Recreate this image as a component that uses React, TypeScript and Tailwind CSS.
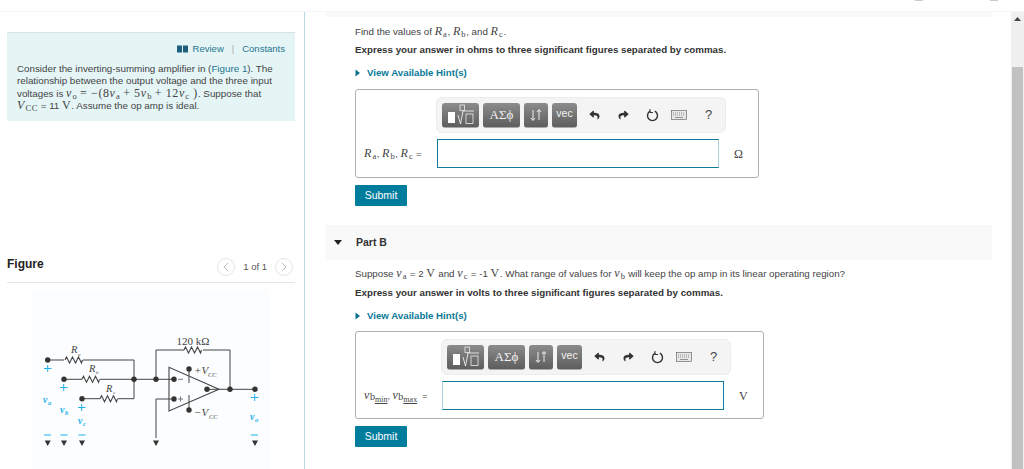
import React from "react";
import { FaReply, FaShare } from "react-icons/fa";

const serif = "font-['Liberation_Serif',serif]";

function V({ s, sub }: { s: string; sub?: string }) {
  return (
    <span className={`${serif} text-[12px] tracking-[0.6px] text-[#444]`}>
      <i>{s}</i>
      {sub && <span className="text-[8.5px] leading-none relative top-[2px] ml-[0.5px]">{sub}</span>}
    </span>
  );
}

function M({ children }: { children: React.ReactNode }) {
  return <span className={`${serif} text-[12px] tracking-[0.6px]`}>{children}</span>;
}

function RootIcon() {
  return (
    <svg width="30" height="24" viewBox="0 0 30 24" fill="none">
      <rect x="2" y="9" width="7" height="11" fill="#fff" />
      <rect x="14" y="2" width="4.5" height="5.5" stroke="#eee" strokeWidth="0.8" />
      <path d="M12 12l2.5 9 2.5-13h11" stroke="#eee" strokeWidth="0.9" />
      <rect x="20" y="11" width="7" height="9.5" stroke="#ddd" strokeWidth="0.9" />
    </svg>
  );
}

function Toolbar() {
  const btn =
    "h-[25px] rounded-[3px] bg-gradient-to-b from-[#8c8c8c] to-[#5e5e5e] border-b border-[#aaa] text-[#f2f2f2] flex items-center justify-center shrink-0";
  return (
    <div className="h-[36px] w-[290px] rounded-[6px] bg-[#f4f4f4] border border-[#ececec] flex items-center pl-[5px] text-[#333]">
      <div className={`${btn} w-[37px]`}>
        <RootIcon />
      </div>
      <div className={`${btn} w-[37px] ml-[4px] ${serif} text-[13px]`}>ΑΣϕ</div>
      <div className={`${btn} w-[24px] ml-[4px]`}>
        <svg width="14" height="14" viewBox="0 0 14 14" fill="none" stroke="#eee" strokeWidth="1">
          <path d="M4 2v10M2 10l2 2.5L6 10M10 12V2M8 4l2-2.5L12 4" />
        </svg>
      </div>
      <div className={`${btn} w-[25px] ml-[4px] text-[10.5px] pb-[1px]`}>vec</div>
      <FaReply className="ml-[12px] w-[11px] h-[10px] text-[#333]" />
      <FaShare className="ml-[18px] w-[11px] h-[10px] text-[#333]" />
      <svg className="ml-[17px]" width="13" height="14" viewBox="0 0 13 14" fill="none" stroke="#333" strokeWidth="1.4">
        <path d="M4.2 3.2a5 5 0 1 0 4.6 0" />
        <path d="M4 1v3.5h3" strokeWidth="1" />
      </svg>
      <svg className="ml-[12px]" width="16" height="10" viewBox="0 0 16 10" fill="#888" stroke="#555" strokeWidth="0.6">
        <rect x="0.5" y="0.5" width="15" height="9" fill="#e8e8e8" />
        <path d="M2 3h12M2 5h12" strokeDasharray="1 1" />
        <path d="M4 7.5h8" />
      </svg>
      <span className="ml-[18px] text-[13px] text-[#444]">?</span>
    </div>
  );
}

function Submit() {
  return (
    <div className="w-[52px] h-[21px] bg-[#007c9d] text-white text-[10.5px] flex items-center justify-center rounded-[1px]">
      Submit
    </div>
  );
}

function Hint() {
  return (
    <div className="flex items-center h-[12px] text-[#0b7a98] font-bold text-[9.7px]">
      <svg width="6" height="8" viewBox="0 0 6 8" className="mr-[6px]">
        <path d="M0.5 0.5L5 4 0.5 7.5z" fill="#0b6f8c" />
      </svg>
      View Available Hint(s)
    </div>
  );
}

function Circuit() {
  const R = (x: number, y: number) =>
    `M${x} ${y}l1.5-3 3 6 3-6 3 6 3-6 3 6 1 -3`;
  const dots = [
    [17.7, 30], [34, 49.3], [52, 68.7], [104, 49.3], [126, 49.3], [144, 49.3], [144, 69],
    [159, 39], [159, 80], [177, 59.3], [200, 59.3], [225, 59.3],
  ];
  const arrows = [17.7, 34, 52, 126, 225];
  const labelBlue = "#1fb0ee";
  return (
    <svg width="240" height="130" viewBox="0 0 240 130" fill="none">
      <g stroke="#444" strokeWidth="1">
        <path d="M17.7 30H34M53 30H104V68.7H88M52 68.7H70M34 49.3H52M70 49.3H144M126 49.3V20H154M173 20H200V59.3M177 59.3H225M126 108V69H144" />
        <path d={R(35, 30)} strokeWidth="1.1" />
        <path d={R(52, 49.3)} strokeWidth="1.1" />
        <path d={R(70, 68.7)} strokeWidth="1.1" />
        <path d={R(154, 20)} strokeWidth="1.1" />
        <path d="M139 37.3L139 81L189 59.3Z" strokeWidth="1.1" />
        <path d="M159 39V53M159 65V80" />
      </g>
      {dots.map(([x, y]) => (
        <circle key={`${x}-${y}`} cx={x} cy={y} r="2.7" fill="#333" />
      ))}
      {arrows.map((x) => (
        <path key={x} d={`M${x - 3} 110.5h6l-3 5.5z`} fill="#333" />
      ))}
      <g stroke={labelBlue} strokeWidth="1">
        <path d="M14 38.5h7.5M17.7 35v7M30 57.5h7.5M33.7 54v7M48 77.5h7.5M51.7 74v7M221 67.5h7.5M224.7 64v7" />
        <path d="M14 105h7M30.5 105h7M48.5 105h7M221 105h7" />
      </g>
      <path d="M148 69h5M150.5 66.5v5M148 49.3h5" stroke="#777" strokeWidth="1" />
      <g fontFamily="'Liberation Serif',serif" fill="#444">
        <text x="163" y="15" textAnchor="middle" fontSize="11">120 kΩ</text>
        <text x="41" y="23" fontSize="10.5" fontStyle="italic">R</text>
        <text x="48" y="26" fontSize="5" fontStyle="italic">a</text>
        <text x="59" y="42" fontSize="10.5" fontStyle="italic">R</text>
        <text x="66" y="44" fontSize="5" fontStyle="italic">b</text>
        <text x="76" y="62" fontSize="10.5" fontStyle="italic">R</text>
        <text x="83" y="64" fontSize="5" fontStyle="italic">c</text>
        <text x="164" y="44" fontSize="11" fontStyle="italic">+V</text>
        <text x="178" y="47" fontSize="6.5" fontStyle="italic">CC</text>
        <text x="164" y="86" fontSize="11" fontStyle="italic">−V</text>
        <text x="179" y="89" fontSize="6.5" fontStyle="italic">CC</text>
      </g>
      <g fontFamily="'Liberation Serif',serif" fill={labelBlue} fontStyle="italic" fontWeight="bold">
        <text x="13" y="73" fontSize="10">v</text>
        <text x="18" y="74.5" fontSize="6.5">a</text>
        <text x="30" y="83" fontSize="10">v</text>
        <text x="35" y="84.5" fontSize="6.5">b</text>
        <text x="48" y="94" fontSize="10">v</text>
        <text x="53" y="95.5" fontSize="6.5">c</text>
        <text x="220" y="90" fontSize="10">v</text>
        <text x="225" y="91.5" fontSize="6.5">o</text>
      </g>
    </svg>
  );
}

export default function App() {
  return (
    <div className="h-[469px] w-[1024px] overflow-hidden bg-white font-['Liberation_Sans',sans-serif] text-[#444] flex flex-col">
      <div className="h-[12px] shrink-0 border-b border-[#f6f6f6] flex items-start">
        <div className="ml-[915px] w-[8px] h-[1px] bg-[#ccc]" />
        <div className="ml-[67px] w-[8px] h-[1px] bg-[#ccc]" />
      </div>
      <div className="flex flex-1 min-h-0">
        <div className="w-[305px] shrink-0 border-r border-[#bcd6e6] flex flex-col pl-[7px] pr-[9px] pt-[20px]">
          <div className="h-[89px] bg-[#e5f5f6] border-t border-[#d8e2e6] pl-[10px] pr-[10px] pt-[10px]">
            <div className="flex justify-end items-center h-[12px] text-[9.5px] text-[#24748f]">
              <svg width="11" height="8" viewBox="0 0 11 8" className="mr-[5px]">
                <rect x="0" y="0.5" width="5" height="7" fill="#1f5f7e" />
                <rect x="6" y="0.5" width="5" height="7" fill="#1f5f7e" />
              </svg>
              <span>Review</span>
              <span className="mx-[8px] text-[#aaa]">|</span>
              <span>Constants</span>
            </div>
            <div className="mt-[8px] text-[9.8px] text-[#444] whitespace-pre">
              <div className="h-[12px] leading-[12px]">
                Consider the inverting-summing amplifier in (<span className="text-[#24748f]">Figure 1</span>). The
              </div>
              <div className="h-[12px] leading-[12px]">relationship between the output voltage and the three input</div>
              <div className="h-[12px] leading-[12px]">
                voltages is <V s="v" sub="o" /> <M>= −(8</M><V s="v" sub="a" /> <M>+ 5</M><V s="v" sub="b" /> <M>+ 12</M><V s="v" sub="c" /><M> )</M>. Suppose that
              </div>
              <div className="h-[12px] leading-[12px]">
                <V s="V" sub="CC" /> = 11 <M>V</M>. Assume the op amp is ideal.
              </div>
            </div>
          </div>
          <div className="mt-[133px] h-[29px] border-b border-[#e2e6e8] flex items-start justify-between pt-[2px]">
            <span className="text-[12px] font-bold text-[#222] leading-[16px]">Figure</span>
            <div className="flex items-center text-[9.5px] text-[#555] mr-[2px] mt-[2px]">
              <span className="w-[18px] h-[18px] rounded-full border border-[#e6e6e6] flex items-center justify-center text-[#bbb]">
                <svg width="6" height="10" viewBox="0 0 6 10" fill="none" stroke="#bbb"><path d="M5 1L1 5l4 4" /></svg>
              </span>
              <span className="mx-[8px]">1 of 1</span>
              <span className="w-[18px] h-[18px] rounded-full border border-[#e6e6e6] flex items-center justify-center">
                <svg width="6" height="10" viewBox="0 0 6 10" fill="none" stroke="#bbb"><path d="M1 1l4 4-4 4" /></svg>
              </span>
            </div>
          </div>
          <div className="ml-[25px] w-[238px] flex-1 bg-[#fbfdfe] mt-[7px] pt-[40px] -mb-[1px]">
            <div className="-ml-[2px]">
              <Circuit />
            </div>
          </div>
        </div>

        <div className="flex-1 min-w-0 pl-[20px] pr-[19px]">
          <div className="h-[5px] bg-[#f9f9f9]" />
          <div className="pl-[30px]">
            <div className="mt-[8px] h-[12px] leading-[12px] text-[9.75px] text-[#444] whitespace-pre">
              Find the values of <V s="R" sub="a" />, <V s="R" sub="b" />, and <V s="R" sub="c" />.
            </div>
            <div className="mt-[7px] h-[12px] leading-[12px] text-[9.75px] font-bold text-[#333] whitespace-nowrap">
              Express your answer in ohms to three significant figures separated by commas.
            </div>
            <div className="mt-[11px]">
              <Hint />
            </div>
            <div className="mt-[10px] w-[404px] h-[89px] border border-[#b0b0b0] rounded-[3px] pt-[7px] relative">
              <div className="ml-[80px]">
                <Toolbar />
              </div>
              <div className="flex items-center mt-[6px] h-[29px]">
                <div className="w-[81px] pl-[8px] whitespace-pre text-[9.4px] leading-[12px]">
                  <V s="R" sub="a" />, <V s="R" sub="b" />, <V s="R" sub="c" /> =
                </div>
                <div className="w-[282px] h-[29px] border border-[#0f7a9a] border-r-[#a9d3e0]" />
                <span className={`${serif} text-[12px] ml-[15px]`}>Ω</span>
              </div>
            </div>
            <div className="mt-[7px]">
              <Submit />
            </div>
          </div>

          <div className="mt-[19px] h-[35px] bg-[#f9f9f9] flex items-center">
            <svg width="8" height="5" viewBox="0 0 8 5" className="ml-[9px]">
              <path d="M0 0h8L4 5z" fill="#222" />
            </svg>
            <span className="ml-[14px] text-[10.5px] font-bold text-[#333]">Part B</span>
          </div>

          <div className="pl-[30px]">
            <div className="mt-[7px] h-[12px] leading-[12px] text-[9.75px] whitespace-pre">
              Suppose <V s="v" sub="a" /> = 2 <M>V</M> and <V s="v" sub="c" /> = -1 <M>V</M>. What range of values for <V s="v" sub="b" /> will keep the op amp in its linear operating region?
            </div>
            <div className="mt-[8px] h-[12px] leading-[12px] text-[9.75px] font-bold text-[#333] whitespace-nowrap">
              Express your answer in volts to three significant figures separated by commas.
            </div>
            <div className="mt-[11px]">
              <Hint />
            </div>
            <div className="mt-[9px] w-[409px] h-[88px] border border-[#b0b0b0] rounded-[3px] pt-[7px]">
              <div className="ml-[85px]">
                <Toolbar />
              </div>
              <div className="flex items-center mt-[6px] h-[29px]">
                <div className="w-[86px] pl-[8px] whitespace-pre text-[9px] leading-[12px]">
                  <V s="v" /><span className={`${serif} text-[10px] relative top-[1px]`}>b<span className="text-[8px] underline relative top-[2px]">min</span></span>,{" "}
                  <V s="v" /><span className={`${serif} text-[10px] relative top-[1px]`}>b<span className="text-[8px] underline relative top-[2px]">max</span></span>  =
                </div>
                <div className="w-[282px] h-[29px] border border-[#0f7a9a] border-l-[#a9d3e0]" />
                <span className={`${serif} text-[12px] ml-[15px]`}>V</span>
              </div>
            </div>
            <div className="mt-[7px]">
              <Submit />
            </div>
          </div>
        </div>

        <div className="w-[13px] shrink-0 bg-[#f0f0f0] flex flex-col items-center">
          <svg width="7" height="4" viewBox="0 0 7 4" className="mt-[5px]">
            <path d="M0 4h7L3.5 0z" fill="#444" />
          </svg>
          <div className="mt-[46px] w-[11px] flex-1 bg-[#c1c1c1]" />
        </div>
      </div>
    </div>
  );
}
